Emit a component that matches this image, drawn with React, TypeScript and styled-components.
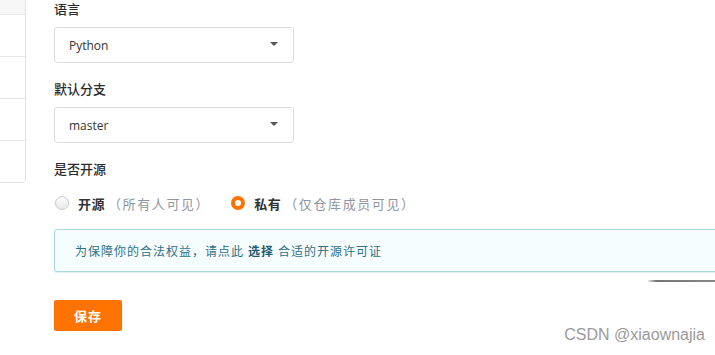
import React, { useState } from 'react';
import styled, { createGlobalStyle } from 'styled-components';

const GlobalStyle = createGlobalStyle`
    html, body {
        margin: 0;
        padding: 0;
        background: #fff;
        overflow: hidden;
    }
    body {
        font-family: "Open Sans", "Noto Sans CJK SC", sans-serif;
        color: #333;
    }
`;

const Page = styled.div`
    position: relative;
    display: flex;
    align-items: flex-start;
    width: 715px;
    height: 355px;
    overflow: hidden;
`;

const SideMenu = styled.ul`
    list-style: none;
    margin: 0;
    padding: 0;
    width: 26px;
    flex: none;
    border: 1px solid #e3e3e3;
    border-left: none;
    border-top: none;
    border-radius: 0 0 4px 0;
    box-sizing: border-box;
`;

const SideItem = styled.li<{ $active?: boolean }>`
    height: ${({ $active }) => ($active ? '14px' : '41px')};
    background: ${({ $active }) => ($active ? '#f7f7f7' : '#fff')};
    border-bottom: 1px solid #e6e6e6;
    &:last-child {
        border-bottom: none;
    }
`;

const Main = styled.div`
    flex: none;
    display: flex;
    flex-direction: column;
    align-items: flex-start;
    padding-left: 28px;
`;

const Label = styled.div<{ $first?: boolean }>`
    font-family: "Noto Sans CJK SC", sans-serif;
    font-size: 13px;
    font-weight: 500;
    line-height: 17px;
    color: #2b2b2b;
    margin-top: ${({ $first }) => ($first ? '0' : '17px')};
    margin-bottom: 10px;
`;

const Select = styled.div`
    width: 240px;
    height: 36px;
    box-sizing: border-box;
    border: 1px solid #dcdcdc;
    border-radius: 3px;
    display: flex;
    align-items: center;
    justify-content: space-between;
    padding: 0 15px 0 14px;
    font-size: 12px;
    color: #333;
`;

const Caret = styled.span`
    width: 0;
    height: 0;
    border-left: 4px solid transparent;
    border-right: 4px solid transparent;
    border-top: 4px solid #555;
    margin-top: -2px;
`;

const RadioRow = styled.div`
    display: flex;
    align-items: center;
    height: 20px;
    margin-top: 6px;
    font-size: 13px;
`;

const RadioOption = styled.label`
    display: flex;
    align-items: center;
    margin-right: 20px;
    cursor: pointer;
`;

const RadioDot = styled.span<{ $checked: boolean }>`
    width: 14px;
    height: 14px;
    border-radius: 50%;
    box-sizing: border-box;
    margin-left: 1px;
    margin-right: 9px;
    border: ${({ $checked }) => ($checked ? '4px solid #ff7200' : '1px solid #c8c8c8')};
    background: ${({ $checked }) => ($checked ? '#fff' : 'linear-gradient(#fdfdfd, #e9e9e9)')};
`;

const RadioTitle = styled.span`
    font-weight: bold;
    color: #333;
    letter-spacing: 0.5px;
`;

const RadioHint = styled.span`
    color: #8f95a0;
    margin-left: 3px;
    letter-spacing: 1.6px;
`;

const Notice = styled.div`
    margin-top: 16px;
    width: 700px;
    height: 43px;
    box-sizing: border-box;
    border: 1px solid #aad8e2;
    border-radius: 3px;
    background: #f6fdff;
    box-shadow: 0 1px 1px rgba(120, 180, 200, 0.25);
    display: flex;
    align-items: center;
    padding-left: 20px;
    font-size: 12px;
    letter-spacing: 1px;
    color: #2f6f84;
`;

const NoticeLink = styled.b`
    color: #1e5a70;
    margin: 0 4px;
`;

const SaveButton = styled.button`
    margin-top: 28px;
    width: 68px;
    height: 31px;
    border: none;
    border-radius: 2px;
    background: #ff7400;
    color: #fff;
    font-family: "Noto Sans CJK SC", sans-serif;
    font-size: 13px;
    font-weight: bold;
    letter-spacing: 1px;
    cursor: pointer;
`;

const ShadowEdge = styled.div`
    position: absolute;
    left: 648px;
    top: 280px;
    width: 80px;
    height: 2px;
    background: linear-gradient(to right, rgba(120,120,120,0.2), #777 8px, #888);
    border-radius: 2px 0 0 2px;
`;

const Watermark = styled.div`
    position: absolute;
    right: 10px;
    bottom: 11px;
    font-family: "Liberation Sans", Arial, sans-serif;
    font-size: 16px;
    color: #9a9a9a;
`;

const options = [
    { key: 'public', title: '开源', hint: '（所有人可见）' },
    { key: 'private', title: '私有', hint: '（仅仓库成员可见）' },
];

const App = () => {
    const [visibility, setVisibility] = useState('private');

    return (
        <Page>
            <GlobalStyle />
            <SideMenu>
                <SideItem $active />
                <SideItem />
                <SideItem />
                <SideItem />
                <SideItem />
            </SideMenu>
            <Main>
                <Label $first>语言</Label>
                <Select>
                    Python
                    <Caret />
                </Select>
                <Label>默认分支</Label>
                <Select>
                    master
                    <Caret />
                </Select>
                <Label>是否开源</Label>
                <RadioRow>
                    {options.map((opt) => (
                        <RadioOption key={opt.key} onClick={() => setVisibility(opt.key)}>
                            <RadioDot $checked={visibility === opt.key} />
                            <RadioTitle>{opt.title}</RadioTitle>
                            <RadioHint>{opt.hint}</RadioHint>
                        </RadioOption>
                    ))}
                </RadioRow>
                <Notice>
                    为保障你的合法权益，请点此<NoticeLink>选择</NoticeLink>合适的开源许可证
                </Notice>
                <SaveButton>保存</SaveButton>
            </Main>
            <ShadowEdge />
            <Watermark>CSDN @xiaownajia</Watermark>
        </Page>
    );
};

export default App;
